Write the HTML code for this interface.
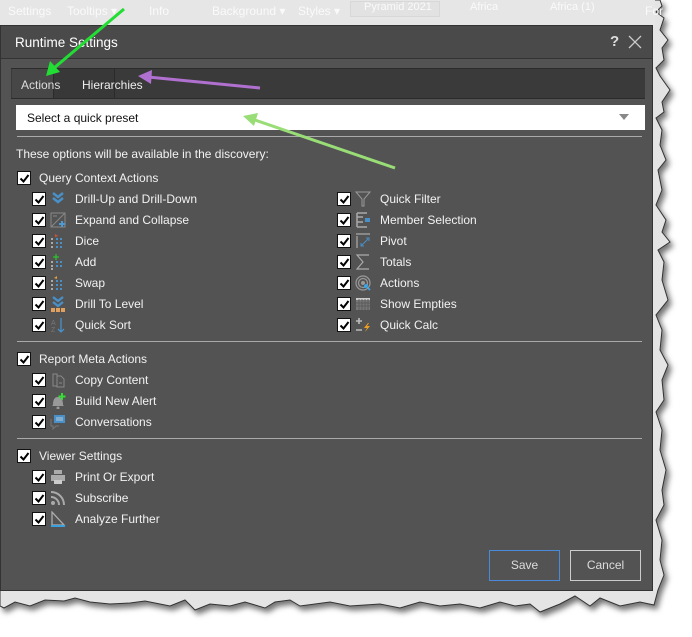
<!DOCTYPE html>
<html><head><meta charset="utf-8"><style>
*{margin:0;padding:0;box-sizing:border-box}
body{width:692px;height:637px;overflow:hidden;background:#fff;font-family:"Liberation Sans",sans-serif;font-size:12px;color:#f2f2f2;position:relative}
.abs{position:absolute}
.top{left:0;top:0;width:655px;height:26px;background:#e6e6e6;color:#fafafa;font-size:12px}
.top span{position:absolute;top:4px}
.dlg{left:0;top:25px;width:653px;height:566px;background:#535353;border:1px solid #333}
.title{left:0;top:0;width:651px;height:33px;background:#4a4a4a;border-bottom:1px solid #333}
.cb{position:absolute;width:14px;height:14px;background:#fff;border:1.5px solid #111}
.cb svg{position:absolute;left:1px;top:1px}
.t{position:absolute;white-space:nowrap;line-height:14px}
.ic{position:absolute}
.sep{position:absolute;left:16px;width:625px;height:1px;background:#aaa}
.btn{position:absolute;top:524px;width:71px;height:31px;text-align:center;line-height:29px;color:#ddd}
</style></head><body>
<svg class="abs" style="left:0;top:0" width="692" height="637">
<defs><filter id="sh"><feDropShadow dx="3" dy="4" stdDeviation="3" flood-color="#000" flood-opacity="0.55"/></filter></defs>
<path filter="url(#sh)" fill="#e4e4e4" stroke="#333" stroke-width="1" d="M0,0 L660,0 662,6 656,12 664,18 660,30 668,40 662,48 664,60 656,68 660,76 670,90 662,102 664,112 656,118 662,130 660,145 666,160 658,170 662,190 656,205 666,220 662,232 670,242 658,250 664,262 662,280 668,300 656,315 662,330 660,350 668,365 662,380 664,400 656,412 662,430 660,450 666,470 662,490 664,505 656,520 662,540 660,560 664,575 658,590 654,605 640,602 620,606 600,598 590,606 575,596 560,604 540,612 530,604 515,606 500,602 480,608 460,604 440,606 420,602 400,608 380,604 350,606 330,602 300,606 290,600 275,602 265,608 245,602 230,606 210,604 195,610 185,600 170,606 160,604 145,601 130,603 110,604 90,602 75,598 64,601 45,600 30,606 15,602 4,608 0,606 Z"/>
</svg>
<div class="abs top">
<span style="left:8px">Settings</span><span style="left:67px">Tooltips ▾</span><span style="left:149px">Info</span>
<span style="left:212px">Background ▾</span><span style="left:298px">Styles ▾</span>
<div class="abs" style="left:350px;top:1px;width:90px;height:16px;border:1px solid #d8d8d8;background:#e2e2e2"></div>
<span style="left:364px;top:1px;font-size:11px">Pyramid 2021</span>
<span style="left:470px;top:1px;font-size:11px">Africa</span><span style="left:550px;top:1px;font-size:11px">Africa (1)</span>
<span style="left:645px">For</span>
</div>
<div class="abs dlg">
<div class="abs title"><span class="t" style="left:14px;top:10px;font-size:13.5px;color:#fff">Runtime Settings</span>
<span class="t" style="left:609px;top:9px;font-size:15px;font-weight:bold;color:#ddd">?</span>
<svg class="ic" style="left:627px;top:9px" width="14" height="14"><path d="M1,1L13,13M13,1L1,13" stroke="#ccc" stroke-width="1.3"/></svg></div>
<div class="abs" style="left:10px;top:42px;width:634px;height:31px;background:#3a3a3a;border-top:1px solid #2b2b2b;border-bottom:1px solid #2b2b2b"></div>
<div class="abs" style="left:11px;top:43px;width:42px;height:29px;background:#474747;border-right:1px solid #2b2b2b"></div>
<div class="abs" style="left:53px;top:43px;width:61px;height:29px;background:#383838;border-right:1px solid #2b2b2b"></div>
<span class="t" style="left:20px;top:52px;color:#ddd">Actions</span>
<span class="t" style="left:81px;top:52px;color:#eee">Hierarchies</span>
<div class="abs" style="left:15px;top:79px;width:629px;height:25px;background:#fff"></div>
<span class="t" style="left:26px;top:85px;color:#111">Select a quick preset</span>
<svg class="ic" style="left:618px;top:88px" width="10" height="6"><path d="M0,0H10L5,6Z" fill="#888"/></svg>
<div class="sep" style="top:110px"></div>
<span class="t" style="left:15px;top:121px">These options will be available in the discovery:</span>

<div id="rows"></div>
<div class="sep" style="top:315px"></div>
<div class="sep" style="top:412px"></div>
<div class="btn" style="left:488px;border:1px solid #4a8ad8">Save</div>
<div class="btn" style="left:569px;border:1px solid #ccc">Cancel</div>
</div>
<svg class="abs" style="left:0;top:0;pointer-events:none" width="692" height="637">
<path d="M124,9L54,68" stroke="#22dd33" stroke-width="3"/><path d="M46,76L50,61L60,72Z" fill="#22dd33"/>
<path d="M260,88L148,77" stroke="#b070d0" stroke-width="3"/><path d="M138,76L152,70L151,84Z" fill="#b070d0"/>
<path d="M395,168L252,119" stroke="#99dd77" stroke-width="3"/><path d="M243,116L258,113L254,126Z" fill="#99dd77"/>
</svg>
<script>
const ck='<svg width="11" height="11"><path d="M1.5,5.5L4.5,8.5L9.5,2" stroke="#000" stroke-width="2" fill="none"/></svg>';
const I={
drill:'<path d="M3,2L8,6L13,2M3,7L8,11L13,7" stroke="#4a90c8" stroke-width="2.5" fill="none"/>',
exp:'<rect x="1" y="1" width="14" height="14" fill="none" stroke="#888"/><path d="M1,15L15,1" stroke="#888"/><path d="M3,4H7" stroke="#888"/><path d="M9,12H15M12,9V15" stroke="#4a9ad8" stroke-width="2"/>',
dice:'<path d="M2,5v2M2,9v2M2,13v2" stroke="#aaa" stroke-width="2"/><rect x="6" y="5" width="2" height="2" fill="#4a90c8"/><rect x="10" y="5" width="2" height="2" fill="#4a90c8"/><rect x="6" y="9" width="2" height="2" fill="#4a90c8"/><rect x="10" y="9" width="2" height="2" fill="#4a90c8"/><rect x="6" y="13" width="2" height="2" fill="#4a90c8"/><rect x="10" y="13" width="2" height="2" fill="#4a90c8"/><path d="M5,1L8,3L5,4Z" fill="#e05030"/>',
add:'<path d="M2,7v2M2,11v2M2,14v2" stroke="#aaa" stroke-width="2"/><rect x="6" y="7" width="2" height="2" fill="#4a90c8"/><rect x="10" y="7" width="2" height="2" fill="#4a90c8"/><rect x="6" y="11" width="2" height="2" fill="#4a90c8"/><rect x="10" y="11" width="2" height="2" fill="#4a90c8"/><path d="M6,0V6M3,3H9" stroke="#2d2"/>',
swap:'<path d="M2,5v2M2,9v2M2,13v2" stroke="#aaa" stroke-width="2"/><rect x="6" y="5" width="2" height="2" fill="#4a90c8"/><rect x="10" y="5" width="2" height="2" fill="#4a90c8"/><rect x="6" y="9" width="2" height="2" fill="#4a90c8"/><rect x="10" y="9" width="2" height="2" fill="#4a90c8"/><rect x="6" y="13" width="2" height="2" fill="#4a90c8"/><rect x="10" y="13" width="2" height="2" fill="#4a90c8"/><path d="M7,1L4,3L7,4Z" fill="#e0a040"/>',
level:'<path d="M3,1L8,5L13,1M3,6L8,10L13,6" stroke="#4a90c8" stroke-width="2.3" fill="none"/><rect x="1" y="12" width="4" height="4" fill="#e0a060"/><rect x="6" y="12" width="4" height="4" fill="#e0a060"/><rect x="11" y="12" width="4" height="4" fill="#e0a060"/>',
sort:'<text x="1" y="8" font-size="7" fill="#777" font-family="Liberation Sans">A</text><text x="1" y="15" font-size="7" fill="#777" font-family="Liberation Sans">Z</text><path d="M11,1V15M8,12L11,15L14,12" stroke="#4a90c8" fill="none" stroke-width="1.3"/>',
filter:'<path d="M1,1H15L9,8V15H7V8Z" fill="none" stroke="#999"/>',
member:'<path d="M2,1V15M2,1H12M2,5H8M2,10H8M2,15H12" stroke="#aaa" stroke-width="1.5" fill="none"/><rect x="10" y="6" width="5" height="4" fill="#4a90c8"/>',
pivot:'<path d="M1,1H15M2,3V15" stroke="#888" stroke-width="2"/><path d="M6,13L13,6M11,5H14V8M6,10V13H9" stroke="#4a90c8" fill="none"/>',
sum:'<path d="M14,1H2L8,8L2,15H14" fill="none" stroke="#aaa" stroke-width="1.2"/>',
act:'<circle cx="8" cy="8" r="7" fill="none" stroke="#999" stroke-width="1.2"/><circle cx="8" cy="8" r="4.5" fill="none" stroke="#999" stroke-width="1.2"/><circle cx="8" cy="8" r="2" fill="#999"/><path d="M10,10L15,15M10,10H13M10,10V13" stroke="#3aaaf0" stroke-width="1.6"/>',
empt:'<rect x="1" y="3" width="14" height="11" fill="#777"/><path d="M1,3H15" stroke="#ccc" stroke-width="2"/><path d="M4,3V14M7,3V14M10,3V14M13,3V14M1,7H15M1,10H15" stroke="#555" stroke-width="0.8"/>',
calc:'<path d="M1,4H7M4,1V7M1,13H7" stroke="#bbb" stroke-width="1.6"/><path d="M13,6L9,11H12L10,15L15,9H12L14,6Z" fill="#f0a020"/>',
copy:'<path d="M3,2H7V14H3Z" fill="none" stroke="#888"/><path d="M7,4H11L14,7V15H7Z" fill="none" stroke="#888"/><path d="M9,11H12" stroke="#888"/>',
alert:'<path d="M3,12C3,6 5,4 8,4C11,4 13,6 13,12L14,13H2Z" fill="#999"/><circle cx="8" cy="15" r="1.5" fill="#999"/><path d="M12,0V7M8.5,3.5H15.5" stroke="#3d3" stroke-width="2"/>',
conv:'<rect x="4" y="1" width="11" height="8" fill="#4a90c8"/><path d="M6,4H13M6,6H13" stroke="#ddd" stroke-width="0.8"/><path d="M1,5V12H3V15L6,12H9" fill="none" stroke="#777"/>',
print:'<rect x="4" y="1" width="8" height="4" fill="#aaa"/><rect x="1" y="6" width="14" height="6" fill="#aaa"/><rect x="4" y="11" width="8" height="4" fill="#ccc"/>',
rss:'<circle cx="3" cy="13" r="2" fill="#aaa"/><path d="M1,7A8,8 0 0 1 9,15M1,2A13,13 0 0 1 14,15" stroke="#aaa" stroke-width="2" fill="none"/>',
anal:'<path d="M2,1V14H14Z" fill="none" stroke="#aaa" stroke-width="1.3"/><path d="M1,15H15" stroke="#3aa0e0" stroke-width="2"/>'
};
let h='';
function cb(x,y){h+=`<div class="cb" style="left:${x}px;top:${y-6}px">${ck}</div>`}
function item(x,y,ic,t){cb(x,y);h+=`<svg class="ic" style="left:${x+18}px;top:${y-7}px" width="16" height="16">${I[ic]}</svg><span class="t" style="left:${x+43}px;top:${y-6}px">${t}</span>`}
function head(y,t){cb(16,y);h+=`<span class="t" style="left:38px;top:${y-6}px">${t}</span>`}
const o=26;
head(177-o,'Query Context Actions');
const L=[['drill','Drill-Up and Drill-Down'],['exp','Expand and Collapse'],['dice','Dice'],['add','Add'],['swap','Swap'],['level','Drill To Level'],['sort','Quick Sort']];
const R=[['filter','Quick Filter'],['member','Member Selection'],['pivot','Pivot'],['sum','Totals'],['act','Actions'],['empt','Show Empties'],['calc','Quick Calc']];
L.forEach((a,i)=>item(31,198+21*i-o,a[0],a[1]));
R.forEach((a,i)=>item(336,198+21*i-o,a[0],a[1]));
head(358-o,'Report Meta Actions');
[['copy','Copy Content'],['alert','Build New Alert'],['conv','Conversations']].forEach((a,i)=>item(31,379+21*i-o,a[0],a[1]));
head(455-o,'Viewer Settings');
[['print','Print Or Export'],['rss','Subscribe'],['anal','Analyze Further']].forEach((a,i)=>item(31,476+21*i-o,a[0],a[1]));
document.getElementById('rows').outerHTML=h;
</script>
</body></html>
